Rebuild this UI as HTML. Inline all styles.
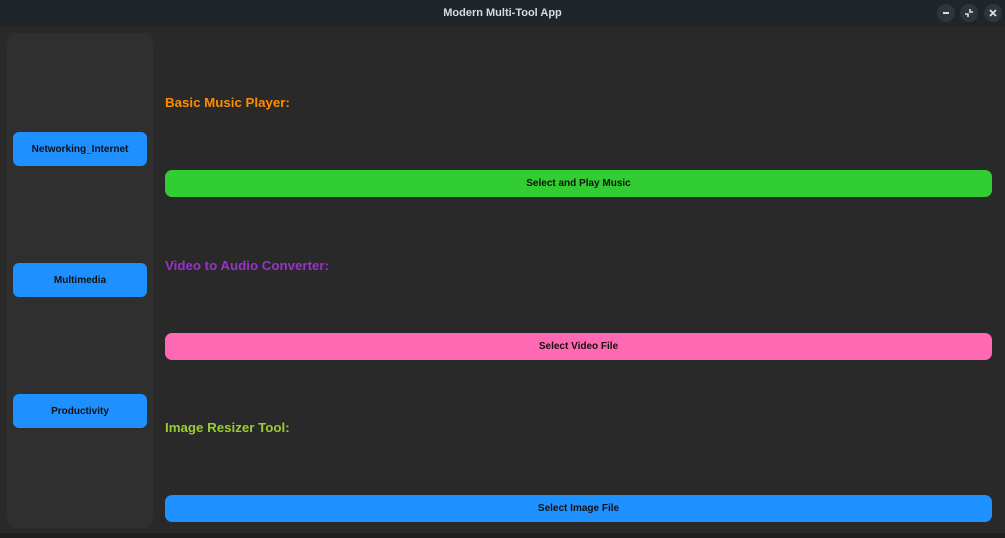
<!DOCTYPE html>
<html><head><meta charset="utf-8"><style>
*{margin:0;padding:0;box-sizing:border-box}
body{width:1005px;height:538px;background:#292929;font-family:"Liberation Sans",sans-serif;position:relative;overflow:hidden}
.tb{position:absolute;left:0;top:0;width:1005px;height:26px;background:#1f2529;color:#d6dde2;font-weight:bold;font-size:11px;text-align:center;line-height:26px}
.c{position:absolute;top:4px;width:18px;height:18px;border-radius:50%;background:#2e363c}
.side{position:absolute;left:7px;top:33px;width:146px;height:495px;background:#2f2f2f;border-radius:9px}
.sb{position:absolute;left:13px;width:134px;height:34px;background:#1e90ff;border-radius:6px;color:#111;font-weight:bold;font-size:10px;text-align:center;line-height:36px}
.h{position:absolute;left:165px;font-weight:bold;font-size:13.3px}
.wb{position:absolute;left:165px;width:827px;height:27px;border-radius:7px;color:#111;font-weight:bold;font-size:10px;text-align:center;line-height:28px}
.bot{position:absolute;left:0;top:533px;width:1005px;height:5px;background:#1d1f1c}
</style></head><body>
<div class="tb">Modern Multi-Tool App</div>
<div class="c" style="left:937px"><svg width="18" height="18"><path d="M6 9h6" stroke="#cfe3ee" stroke-width="2"/></svg></div>
<div class="c" style="left:960px"><svg width="18" height="18"><path d="M10 5v3h3M5 10h3v3" stroke="#cfe3ee" stroke-width="1.6" fill="none"/></svg></div>
<div class="c" style="left:984px"><svg width="18" height="18"><path d="M6 6l6 6M12 6l-6 6" stroke="#cfe3ee" stroke-width="1.8"/></svg></div>
<div class="side"></div>
<div class="sb" style="top:132px">Networking_Internet</div>
<div class="sb" style="top:263px">Multimedia</div>
<div class="sb" style="top:394px">Productivity</div>
<div class="h" style="top:95px;color:#ff8c00">Basic Music Player:</div>
<div class="wb" style="top:170px;background:#32cd32">Select and Play Music</div>
<div class="h" style="top:258px;color:#9932cc">Video to Audio Converter:</div>
<div class="wb" style="top:333px;background:#ff69b4">Select Video File</div>
<div class="h" style="top:420px;color:#9acd32">Image Resizer Tool:</div>
<div class="wb" style="top:495px;background:#1e90ff">Select Image File</div>
<div class="bot"></div>
</body></html>
